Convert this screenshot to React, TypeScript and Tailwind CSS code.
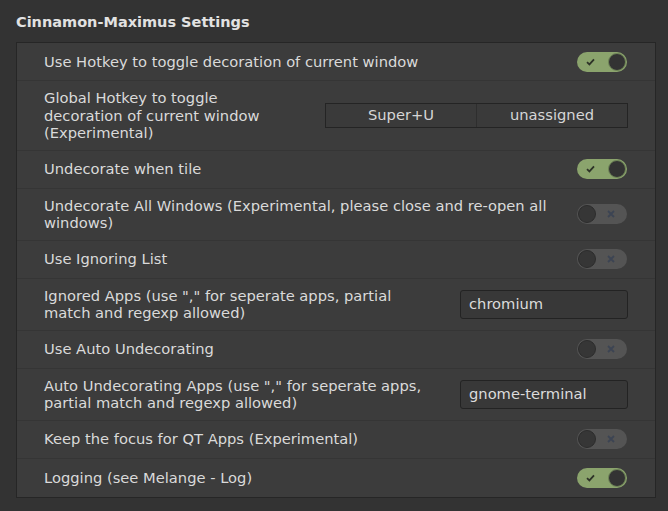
import { ReactNode } from 'react';

type Row =
  | { label: ReactNode; kind: 'switch'; on: boolean }
  | { label: ReactNode; kind: 'hotkey' }
  | { label: ReactNode; kind: 'entry'; value: string };

const rows: Row[] = [
  { label: 'Use Hotkey to toggle decoration of current window', kind: 'switch', on: true },
  {
    label: (
      <>
        Global Hotkey to toggle
        <br />
        decoration of current window
        <br />
        (Experimental)
      </>
    ),
    kind: 'hotkey',
  },
  { label: 'Undecorate when tile', kind: 'switch', on: true },
  {
    label: (
      <>
        Undecorate All Windows (Experimental, please close and re-open all
        <br />
        windows)
      </>
    ),
    kind: 'switch',
    on: false,
  },
  { label: 'Use Ignoring List', kind: 'switch', on: false },
  {
    label: (
      <>
        Ignored Apps (use "," for seperate apps, partial
        <br />
        match and regexp allowed)
      </>
    ),
    kind: 'entry',
    value: 'chromium',
  },
  { label: 'Use Auto Undecorating', kind: 'switch', on: false },
  {
    label: (
      <>
        Auto Undecorating Apps (use "," for seperate apps,
        <br />
        partial match and regexp allowed)
      </>
    ),
    kind: 'entry',
    value: 'gnome-terminal',
  },
  { label: 'Keep the focus for QT Apps (Experimental)', kind: 'switch', on: false },
  { label: 'Logging (see Melange - Log)', kind: 'switch', on: true },
];

function Switch({ on }: { on: boolean }) {
  if (on) {
    return (
      <div className="relative shrink-0 w-[50px] h-[20px] rounded-full bg-[#8ba46d] mr-[1px]">
        <svg className="absolute left-[9px] top-[6px]" width="9" height="8" viewBox="0 0 9 8">
          <path d="M1 4.2 L3.4 6.4 L8 1.4" fill="none" stroke="#2e3328" strokeWidth="1.8" />
        </svg>
        <div className="absolute right-[1px] top-[1px] w-[18px] h-[18px] rounded-full bg-[#333333] border border-[#6f8558]" />
      </div>
    );
  }
  return (
    <div className="relative shrink-0 w-[50px] h-[20px] rounded-full bg-[#545454] mr-[1px]">
      <div className="absolute left-[1px] top-[1px] w-[18px] h-[18px] rounded-full bg-[#363636] border border-[#2c2c2c]" />
      <svg className="absolute right-[12px] top-[6px]" width="8" height="8" viewBox="0 0 8 8">
        <path d="M1 1 L7 7 M7 1 L1 7" stroke="#3c4453" strokeWidth="1.8" />
      </svg>
    </div>
  );
}

function Hotkey() {
  return (
    <div className="flex shrink-0 w-[303px] h-[25px] border border-[#242424] bg-[#3a3a3a] text-[#d6d6d6]">
      <div className="flex-1 flex items-center justify-center border-r border-[#2e2e2e]">Super+U</div>
      <div className="flex-1 flex items-center justify-center">unassigned</div>
    </div>
  );
}

function Entry({ value }: { value: string }) {
  return (
    <div className="shrink-0 w-[168px] h-[29px] rounded-[3px] border border-[#232323] bg-[#383838] flex items-center px-[8px] text-[#dcdcdc]">
      {value}
    </div>
  );
}

export default function App() {
  return (
    <main
      className="w-[668px] h-[511px] bg-[#333333] text-[#dadada] text-[14.7px] overflow-hidden"
      style={{ fontFamily: '"DejaVu Sans", sans-serif' }}
    >
      <h1 className="pl-4 pt-[13px] mb-[11px] font-bold text-[14.5px] leading-[18px] text-[#e2e2e2]">
        Cinnamon-Maximus Settings
      </h1>

      {/* Settings panel */}
      <div className="ml-4 w-[640px] border border-[#262626] bg-[#3c3c3c]">
        {rows.map((row, idx) => (
          <div
            key={idx}
            className={`flex items-center justify-between gap-4 min-h-[38px] py-[8px] pl-[27px] pr-[27px] ${
              idx < rows.length - 1 ? 'border-b border-[#353535]' : ''
            }`}
          >
            <div className="leading-[17.5px] whitespace-nowrap">{row.label}</div>
            {row.kind === 'switch' && <Switch on={row.on} />}
            {row.kind === 'hotkey' && <Hotkey />}
            {row.kind === 'entry' && <Entry value={row.value} />}
          </div>
        ))}
      </div>
    </main>
  );
}
